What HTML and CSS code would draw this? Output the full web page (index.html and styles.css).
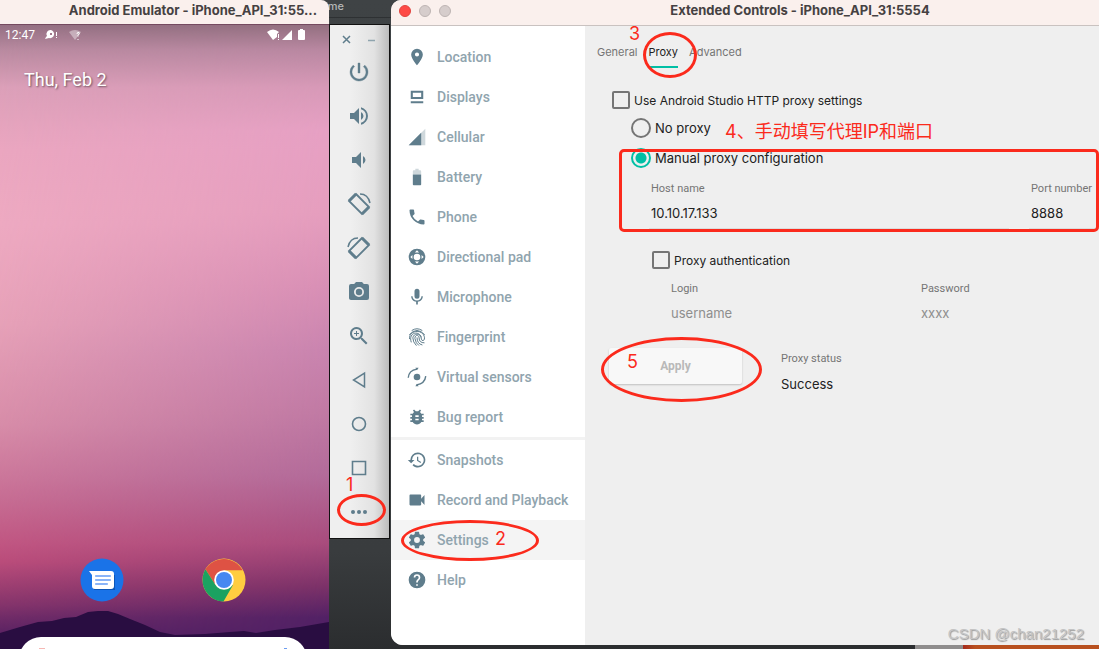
FILE: index.html
```
<!DOCTYPE html>
<html lang="en">
<head>
    <meta charset="UTF-8">
    <meta name="viewport" content="width=device-width, initial-scale=1.0">
    <title>Android Emulator - Extended Controls</title>
    <link rel="stylesheet" href="styles.css">
</head>
<body>
    <div class="desktop">
        <div class="behind">ome</div>
        <div class="strip"></div>

        <!-- Emulator -->
        <section class="window emulator">
            <header class="titlebar">Android Emulator - iPhone_API_31:55...</header>
            <div class="screen">
                <svg class="hills" viewBox="0 0 329 39" preserveAspectRatio="none">
                    <path fill="#290d41" d="M0 23 L20 17 38 12 52 11 64 8 76 7 88 2 98 1 108 1 118 4 130 9 145 15 160 22 175 25 205 24 230 22 244 21 256 23 275 20 300 17 329 12 V39 H0z"/>
                </svg>
                <div class="status-bar">
                    <span>12:47</span>
                    <svg width="14" height="12" viewBox="0 0 14 12" fill="#fff"><path fill-rule="evenodd" d="M6 1a4 4 0 1 1-2 8L0 10l1-2 1-1a4 4 0 0 1 4-6zm-1 3v2h2V4z"/><path d="M11 3h1v4h-1zM11 8h1v1h-1z"/></svg>
                    <svg width="14" height="12" viewBox="0 0 14 12"><path fill="#fff" opacity=".4" d="M0 3Q6-1 12 3L6 11z"/><path fill="none" stroke="#fff" d="M8 5q0-2 2-1.500 1 1-1 3v1M9 10v1"/></svg>
                    <svg class="status-right" width="38" height="12" viewBox="0 0 38 12" fill="#fff"><path d="M0 3Q6-2 12 3L10 5v3L6 11z"/><path d="M11 5h1v4h-1zM11 10h1v1h-1zM15 11 25 1v10zM32 1h1V0h3v1h1q1 0 1 1v8q0 1-1 1h-5q-1 0-1-1V2q0-1 1-1z"/></svg>
                </div>
                <div class="date">Thu, Feb 2</div>
                <div class="dock">
                    <svg width="44" height="44" viewBox="0 0 44 44">
                        <circle cx="22" cy="22" r="21.500" fill="#1a73e8"/>
                        <path fill="#0c55b8" d="M12 17h23v15H14z"/>
                        <path fill="#fff" d="M9 13h22q3 0 3 3v12q0 3-3 3H15q-3 0-3-3V17z"/>
                        <path stroke="#8ab4f8" stroke-width="2.200" stroke-linecap="round" d="M16 18h14M16 22h14M16 26h11"/>
                    </svg>
                    <svg width="44" height="44" viewBox="0 0 44 44">
                        <circle cx="22" cy="22" r="21.500" fill="#ffcd40"/>
                        <path fill="#de5244" d="M3.400 11.300A21.500 21.500 0 0 1 40.600 12.300H22L13.500 27z"/>
                        <path fill="#1ba261" d="M3.400 11.300A21.500 21.500 0 0 0 21.500 43.500L31 27 22 31 13.500 27z"/>
                        <circle cx="22" cy="22" r="9.800" fill="#fff"/>
                        <circle cx="22" cy="22" r="8" fill="#4688f1"/>
                    </svg>
                </div>
                <div class="search-pill"><i class="g-mark"></i><i class="mic-mark"></i></div>
            </div>
        </section>

        <!-- Side toolbar -->
        <aside class="toolbar">
            <div class="toolbar-top">
                <button type="button" aria-label="Close"><svg width="9" height="9" viewBox="0 0 9 9"><path d="M1 1l7 7M8 1 1 8" stroke="#5f7d8c" stroke-width="1.500"/></svg></button>
                <button type="button" aria-label="Minimize"><svg width="9" height="9" viewBox="0 0 9 9"><path d="M1 5.500h7" stroke="#8fa4ae" stroke-width="1.500"/></svg></button>
            </div>
            <button type="button" aria-label="Power"><svg viewBox="0 0 24 24"><path d="M13 3h-2v10h2V3zm4.830 2.170-1.420 1.420A6.920 6.920 0 0 1 19 12a7 7 0 1 1-11.410-5.420L6.170 5.170A8.930 8.930 0 0 0 3 12a9 9 0 1 0 14.830-6.830z" stroke="#5f7d8c" stroke-width=".4"/></svg></button>
            <button type="button" aria-label="Volume up"><svg viewBox="0 0 24 24"><path d="M3 9v6h4l5 5V4L7 9H3zm13.500 3A4.500 4.500 0 0 0 14 7.970v8.050A4.500 4.500 0 0 0 16.500 12zM14 3.230v2.060a7 7 0 0 1 0 13.420v2.060a9 9 0 0 0 0-17.540z"/></svg></button>
            <button type="button" aria-label="Volume down"><svg viewBox="0 0 24 24"><path d="M18.500 12A4.500 4.500 0 0 0 16 7.970v8.050A4.500 4.500 0 0 0 18.500 12zM5 9v6h4l5 5V4L9 9H5z"/></svg></button>
            <button type="button" aria-label="Rotate left"><svg viewBox="0 0 24 24"><g fill="none" stroke="#5f7d8c"><path stroke-width="1.800" d="M9 2 22 15 15 22 2 9z"/><path stroke-width="3" d="M9 2 2 9M22 15l-7 7"/><path stroke-width="1.500" d="M13 2q8 0 10 9"/></g></svg></button>
            <button type="button" aria-label="Rotate right"><svg viewBox="0 0 24 24"><g fill="none" stroke="#5f7d8c"><path stroke-width="1.800" d="M15 2 2 15l7 7L22 9z"/><path stroke-width="3" d="M15 2l7 7M2 15l7 7"/><path stroke-width="1.500" d="M11 2Q3 2 1 11"/></g></svg></button>
            <button type="button" aria-label="Take screenshot"><svg viewBox="0 0 24 24"><circle cx="12" cy="12" r="3.200"/><path d="M9 2 7.170 4H4a2 2 0 0 0-2 2v12c0 1.100.9 2 2 2h16a2 2 0 0 0 2-2V6a2 2 0 0 0-2-2h-3.170L15 2H9zm3 15a5 5 0 1 1 0-10 5 5 0 0 1 0 10z"/></svg></button>
            <button type="button" aria-label="Zoom"><svg viewBox="0 0 24 24"><path d="M15.500 14h-.79l-.28-.27A6.500 6.500 0 1 0 13.730 14.430l.27.28v.79l5 4.990L20.490 19l-4.990-5zm-6 0a4.500 4.500 0 1 1 0-9 4.500 4.500 0 0 1 0 9zm2.500-4h-2v2H9v-2H7V9h2V7h1v2h2v1z"/></svg></button>
            <button type="button" aria-label="Back"><svg viewBox="0 0 24 24"><path d="M17.500 5v14L6.500 12z" fill="none" stroke="#5f7d8c" stroke-width="1.500"/></svg></button>
            <button type="button" aria-label="Home"><svg viewBox="0 0 24 24"><circle cx="12" cy="12" r="6.500" fill="none" stroke="#5f7d8c" stroke-width="1.600"/></svg></button>
            <button type="button" aria-label="Overview"><svg viewBox="0 0 24 24"><path d="M5.500 5.500h13v13h-13z" fill="none" stroke="#5f7d8c" stroke-width="1.600"/></svg></button>
            <button type="button" aria-label="More"><svg viewBox="0 0 24 24"><circle cx="6" cy="12" r="2"/><circle cx="12" cy="12" r="2"/><circle cx="18" cy="12" r="2"/></svg></button>
        </aside>

        <!-- Extended controls -->
        <section class="window controls">
            <header class="titlebar">
                <div class="lights"><i class="light close"></i><i class="light"></i><i class="light"></i></div>
                Extended Controls - iPhone_API_31:5554
            </header>
            <div class="controls-body">
                <nav class="menu">
                    <a href="#"><svg viewBox="0 0 24 24"><path d="M12 2a7 7 0 0 0-7 7c0 5.250 7 13 7 13s7-7.750 7-13a7 7 0 0 0-7-7zm0 9.500a2.500 2.500 0 1 1 0-5 2.500 2.500 0 0 1 0 5z"/></svg>Location</a>
                    <a href="#"><svg viewBox="0 0 24 24"><path fill-rule="evenodd" d="M4.500 4.500h15v10h-15zm2.500 2.500v5h10V7zM4.500 17h15v2.500h-15z"/></svg>Displays</a>
                    <a href="#"><svg viewBox="0 0 24 24"><path opacity=".3" d="M2 22h20V2z"/><path d="M17 7 2 22h15z"/></svg>Cellular</a>
                    <a href="#"><svg viewBox="0 0 24 24"><path opacity=".3" d="M17 5.330C17 4.600 16.400 4 15.670 4H14V2h-4v2H8.330C7.600 4 7 4.600 7 5.330V9h10V5.330z"/><path d="M7 9v11.670C7 21.400 7.600 22 8.330 22h7.330c.74 0 1.340-.6 1.340-1.330V9H7z"/></svg>Battery</a>
                    <a href="#"><svg viewBox="0 0 24 24"><path d="M6.620 10.790a15.150 15.150 0 0 0 6.590 6.590l2.200-2.200c.27-.27.67-.36 1.020-.24 1.120.37 2.330.57 3.570.57.55 0 1 .45 1 1V20c0 .55-.45 1-1 1A17 17 0 0 1 3 4c0-.55.45-1 1-1h3.500c.55 0 1 .45 1 1 0 1.250.2 2.450.57 3.570.11.350.03.740-.25 1.020l-2.200 2.200z"/></svg>Phone</a>
                    <a href="#"><svg viewBox="0 0 24 24"><path fill-rule="evenodd" d="M12 2a10 10 0 1 0 0 20 10 10 0 0 0 0-20zM9.500 6.500 12 4l2.500 2.500zM9.500 17.500 12 20l2.500-2.500zM6.500 9.500 4 12l2.500 2.500zM17.500 9.500 20 12l-2.500 2.500zM12 8a4 4 0 1 1 0 8 4 4 0 0 1 0-8z"/></svg>Directional pad</a>
                    <a href="#"><svg viewBox="0 0 24 24"><path d="M12 14a3 3 0 0 0 3-3V5a3 3 0 1 0-6 0v6a3 3 0 0 0 3 3zm5.300-3a5.300 5.300 0 0 1-10.600 0H5c0 3.410 2.720 6.230 6 6.720V21h2v-3.280c3.280-.48 6-3.300 6-6.720h-1.700z"/></svg>Microphone</a>
                    <a href="#"><svg viewBox="0 0 24 24"><g fill="none" stroke="#5f7d8c" stroke-width="1.200" stroke-linecap="round"><path d="M6 4q6-4 12 0M3 9q9-10 18 0M3 14C2 3 20 2 21 13q0 4-3 3-1-1-1-3c-1-6-9-6-10 0q0 5 4 9M5 18C1 6 15 4 17 12M9.500 13c0-4 5-4 5 0q0 6 6 6M12 13q0 7 6 8.500M9.500 14q1 6 4.500 8"/></g></svg>Fingerprint</a>
                    <a href="#"><svg viewBox="0 0 24 24"><circle cx="12" cy="12" r="4"/><path d="M10 1h4l-2 3zM14 23h-4l2-3z"/><path fill="none" stroke="#5f7d8c" stroke-width="1.700" d="M1.500 13Q2 4 12 2.500M22.500 11q-1 9-11 10.500"/></svg>Virtual sensors</a>
                    <a href="#"><svg viewBox="0 0 24 24"><path d="M20 8h-2.810a5.990 5.990 0 0 0-1.820-1.960L17 4.410 15.590 3l-2.170 2.170a6.020 6.020 0 0 0-2.830 0L8.410 3 7 4.410l1.620 1.630C7.880 6.550 7.260 7.220 6.810 8H4v2h2.090c-.05.330-.09.660-.09 1v1H4v2h2v1c0 .34.04.67.09 1H4v2h2.810a6 6 0 0 0 10.380 0H20v-2h-2.090c.05-.33.09-.66.09-1v-1h2v-2h-2v-1c0-.34-.04-.67-.09-1H20V8zm-6 8h-4v-2h4v2zm0-4h-4v-2h4v2z"/></svg>Bug report</a>
                    <hr>
                    <a href="#"><svg viewBox="0 0 24 24"><path d="M13 3a9 9 0 0 0-9 9H1l3.890 3.890.07.14L9 12H6a7 7 0 1 1 2.060 4.940l-1.420 1.420A9 9 0 1 0 13 3zm-1 5v5l4.280 2.540.72-1.210-3.500-2.080V8H12z"/></svg>Snapshots</a>
                    <a href="#"><svg viewBox="0 0 24 24"><path d="M17 10.500V6.500a1 1 0 0 0-1-1H4a1 1 0 0 0-1 1v11a1 1 0 0 0 1 1h12a1 1 0 0 0 1-1v-4l4 4.500V6z"/></svg>Record and Playback</a>
                    <a href="#" class="active"><svg viewBox="0 0 24 24"><path d="M19.430 12.980c.04-.32.07-.64.07-.98s-.03-.66-.07-.98l2.110-1.650c.19-.15.24-.42.12-.64l-2-3.460c-.12-.22-.39-.3-.61-.22l-2.490 1c-.52-.4-1.080-.73-1.690-.98l-.38-2.650A.488.488 0 0 0 14 2h-4c-.25 0-.46.18-.49.42l-.38 2.650c-.61.25-1.170.59-1.690.98l-2.490-1c-.23-.09-.49 0-.61.22l-2 3.460c-.13.22-.07.49.12.64l2.110 1.650c-.04.32-.07.65-.07.98s.03.66.07.98l-2.110 1.650c-.19.15-.24.42-.12.64l2 3.460c.12.22.39.3.61.22l2.490-1c.52.4 1.080.73 1.690.98l.38 2.650c.03.24.24.42.49.42h4c.25 0 .46-.18.49-.42l.38-2.650c.61-.25 1.170-.59 1.690-.98l2.490 1c.23.09.49 0 .61-.22l2-3.460c.12-.22.07-.49-.12-.64l-2.110-1.650zM12 15.500a3.500 3.500 0 1 1 0-7 3.500 3.500 0 0 1 0 7z"/></svg>Settings</a>
                    <a href="#"><svg viewBox="0 0 24 24"><path d="M12 2a10 10 0 1 0 0 20 10 10 0 0 0 0-20zm1 17h-2v-2h2v2zm2.070-7.750-.9.920C13.450 12.900 13 13.500 13 15h-2v-.5c0-1.100.45-2.100 1.170-2.830l1.240-1.260c.37-.36.59-.86.59-1.410a2 2 0 1 0-4 0H8a4 4 0 1 1 8 0c0 .88-.36 1.680-.93 2.250z"/></svg>Help</a>
                </nav>

                <main class="panel">
                    <div class="tabs">
                        <button type="button">General</button>
                        <button type="button" class="selected">Proxy</button>
                        <button type="button">Advanced</button>
                    </div>
                    <form class="proxy-form">
                        <label class="check small"><input type="checkbox">Use Android Studio HTTP proxy settings</label>
                        <label class="check option"><input type="radio" name="proxy">No proxy</label>
                        <label class="check option manual"><input type="radio" name="proxy" checked>Manual proxy configuration</label>
                        <div class="fields host-fields">
                            <div class="field">
                                <label for="host">Host name</label>
                                <input type="text" id="host" value="10.10.17.133">
                            </div>
                            <div class="field">
                                <label for="port">Port number</label>
                                <input type="text" id="port" value="8888">
                            </div>
                        </div>
                        <label class="check small auth"><input type="checkbox">Proxy authentication</label>
                        <div class="fields login-fields">
                            <div class="field">
                                <label for="login">Login</label>
                                <input type="text" id="login" placeholder="username" disabled>
                            </div>
                            <div class="field">
                                <label for="password">Password</label>
                                <input type="password" id="password" placeholder="xxxx" disabled>
                            </div>
                        </div>
                        <div class="actions">
                            <button type="submit" class="apply-btn" disabled>Apply</button>
                            <div class="proxy-status">
                                <span>Proxy status</span>
                                <output>Success</output>
                            </div>
                        </div>
                    </form>
                </main>
            </div>
        </section>

        <!-- Step marks drawn over the windows -->
        <i class="mark ring-more"></i>
        <i class="mark ring-settings"></i>
        <i class="mark ring-proxy"></i>
        <i class="mark box-manual"></i>
        <i class="mark ring-apply"></i>
        <span class="step step-1">1</span>
        <span class="step step-2">2</span>
        <span class="step step-3">3</span>
        <span class="step step-4" lang="zh">4、手动填写代理IP和端口</span>
        <span class="step step-5">5</span>
        <span class="watermark">CSDN @chan21252</span>
    </div>
</body>
</html>
```
FILE: styles.css
```
* {
    box-sizing: border-box;
}
body {
    margin: 0;
    font-family: Roboto, "Liberation Sans", sans-serif;
}
button, input {
    font-family: inherit;
}
button {
    border: none;
    background: none;
    padding: 0;
}
svg {
    display: block;
    flex: none;
}
.desktop {
    position: relative;
    height: 100vh;
    overflow: hidden;
    background: linear-gradient(#3f4345, #393c3e 85%, #2b2d2f);
}
.behind {
    position: absolute;
    left: 321px;
    top: 0;
    width: 80px;
    height: 18px;
    border-bottom: 1px solid #2e3133;
    color: #b4b6b7;
    font: 500 11px/12px Inter, sans-serif;
}
.strip {
    position: absolute;
    left: 915px;
    right: 0;
    bottom: 0;
    height: 6px;
    background: linear-gradient(90deg, #8f8d8d 48px, #a52a1c 48px, #b8501f 60px);
}

/* Windows */
.window {
    position: absolute;
    top: 0;
    display: flex;
    flex-direction: column;
    overflow: hidden;
}
.titlebar {
    position: relative;
    flex: none;
    background: #faf0ed;
    color: #454142;
    font: 700 13px/20px Inter, sans-serif;
    text-align: center;
    white-space: nowrap;
}

/* Emulator */
.emulator {
    left: 0;
    bottom: 0;
    width: 329px;
    border-radius: 0 8px 0 0;
}
.emulator .titlebar {
    height: 24px;
    padding-right: 12px;
    text-align: right;
}
.screen {
    position: relative;
    flex: 1;
    display: flex;
    flex-direction: column;
    border-top: 1px solid #754a60;
    background: linear-gradient(#947083, #b98aa0 4%, #dca0b9 10%, #eba7c0 20%, #efabc2 32%, #eaa5b9 48%, #dd91aa 64%, #cd7094 76%, #c5507d 86%, #8f386d 93%, #592161 98%);
}
.screen::before {
    content: "";
    position: absolute;
    inset: 0;
    background: linear-gradient(#93707f, #b987a2 4%, #d697b7 10%, #e69fc5 17%, #e39bbd 30%, #d58bb4 42%, #c580ae 52%, #bd77a3 62%, #b06a9a 72%, #a74b7c 83%, #7a3168 90%, #512165 95%);
    mask-image: linear-gradient(100deg, transparent, #000);
}
.hills {
    position: absolute;
    left: 0;
    bottom: 0;
    width: 100%;
    height: 39px;
}
.status-bar {
    position: relative;
    display: flex;
    align-items: center;
    gap: 10px;
    height: 20px;
    padding: 0 24px 0 5px;
    color: #fff;
    font-size: 12px;
}
.status-right {
    margin-left: auto;
}
.date {
    position: relative;
    padding: 23px 24px;
    color: #fff;
    font-size: 18px;
    line-height: 24px;
    text-shadow: 1px 1px 2px rgba(0,0,0,0.5);
}
.dock {
    position: relative;
    display: flex;
    gap: 78px;
    margin-top: auto;
    padding: 0 80px 35px;
}
.search-pill {
    position: relative;
    flex: none;
    display: flex;
    justify-content: space-between;
    height: 44px;
    margin: 0 22px -32px 19px;
    padding: 11px 20px;
    border-radius: 22px;
    background: #fff;
}
.g-mark, .mic-mark {
    width: 6px;
    height: 2px;
    background: #f6b8b4;
}
.mic-mark {
    width: 3px;
    background: #6b9cf0;
}

/* Toolbar */
.toolbar {
    position: absolute;
    left: 329px;
    top: 24px;
    width: 61px;
    padding: 0 2px 4px 0;
    border: 1px solid #111;
    display: flex;
    flex-direction: column;
    align-items: center;
    background: linear-gradient(90deg, #efefef 35%, #e2e2e2 75%, #bcbcbc);
}
.toolbar > button {
    display: flex;
    align-items: center;
    justify-content: center;
    width: 44px;
    height: 44px;
}
.toolbar > button svg {
    width: 24px;
    height: 24px;
}
.toolbar svg, .menu svg {
    fill: #5f7d8c;
}
.toolbar-top {
    display: flex;
    gap: 16px;
    height: 25px;
    align-items: flex-end;
    padding-bottom: 6px;
}

/* Extended controls, its right side runs off the desktop */
.controls {
    left: 391px;
    right: -110px;
    bottom: 4px;
    border-radius: 10px 0 0 12px;
    background: #efefef;
}
.controls .titlebar {
    height: 26px;
    border-bottom: 1px solid #c9c2c0;
}
.lights {
    position: absolute;
    left: 8px;
    top: 5px;
    display: flex;
    gap: 8px;
}
.light {
    width: 12px;
    height: 12px;
    border: 1px solid #bdb4b3;
    border-radius: 50%;
    background: #d6cdcc;
}
.light.close {
    border-color: #e0443e;
    background: #fe4a46;
}
.controls-body {
    flex: 1;
    display: flex;
}
.menu {
    flex: none;
    width: 194px;
    padding-top: 11px;
    background: #fff;
}
.menu a {
    display: flex;
    align-items: center;
    gap: 10px;
    height: 40px;
    padding-left: 16px;
    color: #90a4ae;
    font-size: 14px;
    font-weight: 500;
    text-decoration: none;
}
.menu a.active {
    background: #f4f4f4;
}
.menu svg {
    width: 20px;
    height: 20px;
}
.menu hr {
    height: 3px;
    margin: 0;
    border: none;
    background: #f2f2f2;
}

/* Settings panel */
.panel {
    flex: 1;
    font-family: Inter, sans-serif;
}
.tabs {
    display: flex;
    gap: 11px;
    padding: 16px 12px 0;
}
.tabs button {
    padding-bottom: 4px;
    border-bottom: 2px solid transparent;
    color: #757575;
    font-size: 11px;
    line-height: 20px;
}
.tabs button.selected {
    border-color: #00bfa5;
    color: #212121;
}
.proxy-form {
    padding: 22px 20px 0 24px;
    color: #212121;
}
.check {
    display: flex;
    align-items: center;
    gap: 4px;
    height: 20px;
    font-size: 13px;
}
.check.small {
    padding-left: 3px;
    font-size: 12px;
}
.check.option {
    margin-top: 8px;
    padding-left: 22px;
}
.check.manual {
    margin-top: 10px;
}
.check.auth {
    margin-top: 21px;
    padding-left: 43px;
}
.check input {
    appearance: none;
    width: 18px;
    height: 18px;
    margin: 0;
    border: 2px solid #757575;
    border-radius: 2px;
}
.check input[type="radio"] {
    width: 20px;
    height: 20px;
    border-radius: 50%;
}
.check input[type="radio"]:checked {
    border-color: #00bfa5;
    background: radial-gradient(#00bfa5 5px, transparent 6px);
}
.fields {
    display: grid;
    column-gap: 20px;
}
.host-fields {
    grid-template-columns: 9fr 4fr;
    margin: 13px 0 0 40px;
}
.login-fields {
    grid-template-columns: 1fr 1fr;
    margin: 11px 40px 0 60px;
}
.field {
    display: flex;
    flex-direction: column;
    gap: 5px;
}
.field label, .proxy-status span {
    padding-left: 2px;
    color: #757575;
    font: 11px/16px Roboto, sans-serif;
}
.field input {
    width: 100%;
    height: 27px;
    padding: 0 0 4px 2px;
    border: none;
    border-bottom: 1px solid #dcdcdc;
    background: none;
    color: #212121;
    font-size: 13px;
}
.field input:disabled {
    border-color: transparent;
}
.field input::placeholder {
    color: #8e8e8e;
}
.actions {
    display: flex;
    gap: 37px;
    margin-top: 19px;
}
.apply-btn {
    width: 133px;
    height: 36px;
    border-radius: 2px;
    background: #f8f8f8;
    box-shadow: 0 1px 2px rgba(0,0,0,0.2);
    color: #b9b9b9;
    font: 700 12px Roboto, sans-serif;
}
.proxy-status {
    display: flex;
    flex-direction: column;
    gap: 7px;
    padding-top: 3px;
}
.proxy-status output {
    padding-left: 2px;
    font-size: 13px;
    line-height: 20px;
}

/* Step marks */
.mark {
    position: absolute;
    border: 3px solid #fb2a1c;
    border-radius: 50%;
}
.ring-more {
    left: 337px;
    top: 494px;
    width: 49px;
    height: 32px;
}
.ring-settings {
    left: 401px;
    top: 520px;
    width: 138px;
    height: 41px;
}
.ring-proxy {
    left: 643px;
    top: 32px;
    width: 54px;
    height: 46px;
}
.box-manual {
    left: 619px;
    top: 149px;
    width: 480px;
    height: 83px;
    border-radius: 5px;
}
.ring-apply {
    left: 601px;
    top: 337px;
    width: 161px;
    height: 65px;
}
.step {
    position: absolute;
    color: #fb2a1c;
    font: 18px/20px Inter, "Noto Sans CJK SC", sans-serif;
    white-space: nowrap;
}
.step-1 {
    left: 346px;
    top: 475px;
}
.step-2 {
    left: 495px;
    top: 529px;
}
.step-3 {
    left: 629px;
    top: 24px;
}
.step-4 {
    left: 725px;
    top: 122px;
}
.step-5 {
    left: 627px;
    top: 352px;
}
.watermark {
    position: absolute;
    right: 15px;
    bottom: 5px;
    color: #c4c4c4;
    font: 15px/20px "Liberation Sans", sans-serif;
    text-shadow: 1px 1px 1px #999;
}
```
